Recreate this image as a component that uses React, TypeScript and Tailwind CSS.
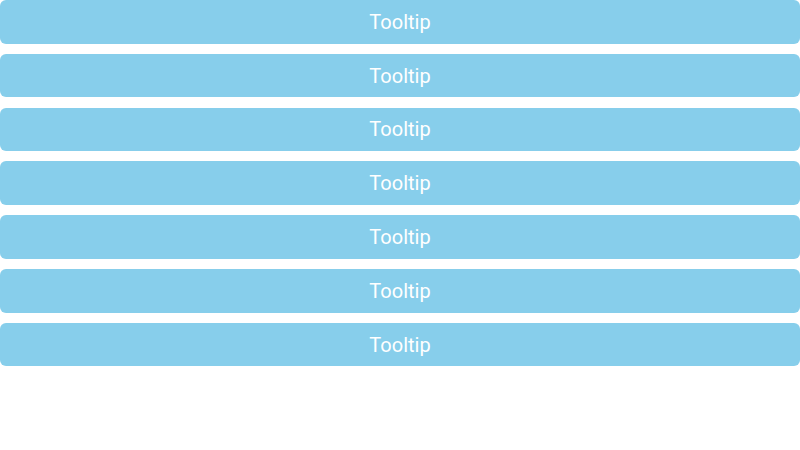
import React from 'react';

export default function App() {
  const items = Array.from({ length: 7 });

  return (
    <div className="w-[800px] h-[450px] bg-white flex flex-col gap-[10.33px]" style={{ fontFamily: 'Roboto, sans-serif' }}>
      {items.map((_, i) => (
        <button
          key={i}
          className="w-full h-[43.5px] shrink-0 rounded-md bg-[#87ceeb] text-white text-[20px] flex items-center justify-center"
        >
          Tooltip
        </button>
      ))}
    </div>
  );
}
